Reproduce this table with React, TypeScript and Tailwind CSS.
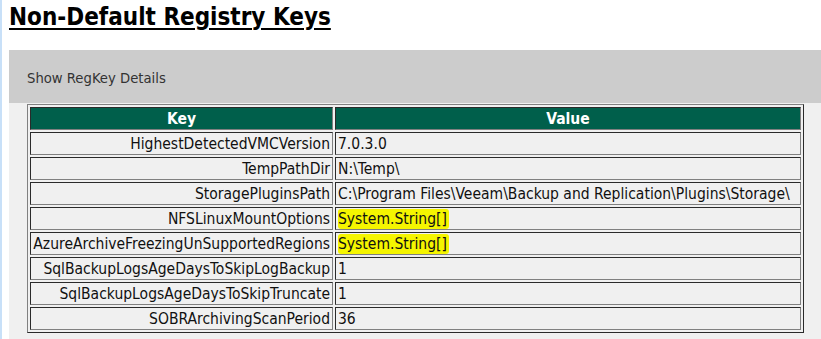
import React from "react";

const rows: { k: string; v: string; hl?: boolean }[] = [
  { k: "HighestDetectedVMCVersion", v: "7.0.3.0" },
  { k: "TempPathDir", v: "N:\\Temp\\" },
  { k: "StoragePluginsPath", v: "C:\\Program Files\\Veeam\\Backup and Replication\\Plugins\\Storage\\" },
  { k: "NFSLinuxMountOptions", v: "System.String[]", hl: true },
  { k: "AzureArchiveFreezingUnSupportedRegions", v: "System.String[]", hl: true },
  { k: "SqlBackupLogsAgeDaysToSkipLogBackup", v: "1" },
  { k: "SqlBackupLogsAgeDaysToSkipTruncate", v: "1" },
  { k: "SOBRArchivingScanPeriod", v: "36" },
];

const font = { fontFamily: '"DejaVu Sans Condensed", "DejaVu Sans", sans-serif' };

export default function App() {
  return (
    <div className="flex h-[339px] w-[821px] overflow-hidden bg-white text-black" style={font}>
      <div className="w-[2px] shrink-0 bg-[#c8e0f8]" />
      <div className="flex min-w-0 flex-1 flex-col pl-[7px]">
        <div className="h-[50px] pt-[3px]">
          <h1 className="text-[24px] font-bold leading-[28px] underline decoration-2 underline-offset-[3px]">
            Non-Default Registry Keys
          </h1>
        </div>
        <div className="flex h-[53px] items-center bg-[#cccccc] pl-[18px] pt-[3px] text-[14.7px] text-[#333333]">
          Show RegKey Details
        </div>
        <div className="flex-1 bg-[#f0f0f0] pl-[18px] pt-[1px]">
          <table className="w-[777px] table-fixed border-separate border-spacing-[2px] border border-t-[#808080] border-l-[#808080] border-r-[#2a2a2a] border-b-[#2a2a2a] text-[15.5px]">
            <colgroup>
              <col className="w-[303px]" />
              <col />
            </colgroup>
            <thead>
              <tr>
                <th className="h-[23px] border border-t-[#2a2a2a] border-l-[#2a2a2a] border-r-[#808080] border-b-[#808080] bg-[#005f4b] p-0 pt-[1px] text-center font-bold leading-[20px] text-white">
                  Key
                </th>
                <th className="h-[23px] border border-t-[#2a2a2a] border-l-[#2a2a2a] border-r-[#808080] border-b-[#808080] bg-[#005f4b] p-0 pt-[1px] text-center font-bold leading-[20px] text-white">
                  Value
                </th>
              </tr>
            </thead>
            <tbody>
              {rows.map((r) => (
                <tr key={r.k}>
                  <td className="h-[23px] whitespace-nowrap border border-t-[#2a2a2a] border-l-[#2a2a2a] border-r-[#808080] border-b-[#808080] pb-0 pt-[1px] pl-[1px] pr-[2px] text-right leading-[20px] text-[#111111]">
                    {r.k}
                  </td>
                  <td className="h-[23px] whitespace-nowrap border border-t-[#2a2a2a] border-l-[#2a2a2a] border-r-[#808080] border-b-[#808080] pb-0 pt-[1px] pl-[2px] pr-[1px] text-left leading-[20px] text-[#111111]">
                    {r.hl ? (
                      <span className="rounded-[3px] bg-[#f5f500] py-[1px] pr-[2px]">{r.v}</span>
                    ) : (
                      r.v
                    )}
                  </td>
                </tr>
              ))}
            </tbody>
          </table>
        </div>
      </div>
    </div>
  );
}
